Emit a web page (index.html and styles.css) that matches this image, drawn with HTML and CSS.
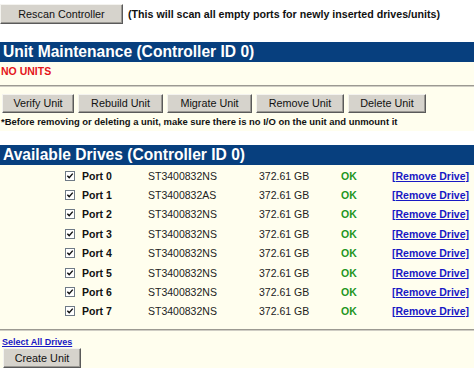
FILE: index.html
```html
<!DOCTYPE html>
<html>
<head>
<meta charset="utf-8">
<link rel="stylesheet" href="styles.css">
</head>
<body>
<div class="top">
  <button class="btn btn-rescan">Rescan Controller</button>
  <span class="top-note">(This will scan all empty ports for newly inserted drives/units)</span>
</div>

<div class="section-head head-unit">Unit Maintenance (Controller ID 0)</div>
<div class="panel panel-unit">
  <div class="no-units">NO UNITS</div>
  <div class="rule"></div>
  <div class="btn-row">
    <button class="btn btn-verify">Verify Unit</button>
    <button class="btn btn-rebuild">Rebuild Unit</button>
    <button class="btn btn-migrate">Migrate Unit</button>
    <button class="btn btn-remove">Remove Unit</button>
    <button class="btn btn-delete">Delete Unit</button>
  </div>
  <div class="warn">*Before removing or deleting a unit, make sure there is no I/O on the unit and unmount it</div>
</div>

<div class="section-head head-drives">Available Drives (Controller ID 0)</div>
<div class="panel panel-drives">
  <div class="drives">
    <div class="drive"><span class="cb"><svg viewBox="0 0 9 9"><path d="M1.5 4.2 L3.6 6.3 L7.6 1.8" /></svg></span><span class="port">Port 0</span><span class="model">ST3400832NS</span><span class="size">372.61 GB</span><span class="ok">OK</span><a class="rm" href="#">[Remove Drive]</a></div>
    <div class="drive"><span class="cb"><svg viewBox="0 0 9 9"><path d="M1.5 4.2 L3.6 6.3 L7.6 1.8" /></svg></span><span class="port">Port 1</span><span class="model">ST3400832AS</span><span class="size">372.61 GB</span><span class="ok">OK</span><a class="rm" href="#">[Remove Drive]</a></div>
    <div class="drive"><span class="cb"><svg viewBox="0 0 9 9"><path d="M1.5 4.2 L3.6 6.3 L7.6 1.8" /></svg></span><span class="port">Port 2</span><span class="model">ST3400832NS</span><span class="size">372.61 GB</span><span class="ok">OK</span><a class="rm" href="#">[Remove Drive]</a></div>
    <div class="drive"><span class="cb"><svg viewBox="0 0 9 9"><path d="M1.5 4.2 L3.6 6.3 L7.6 1.8" /></svg></span><span class="port">Port 3</span><span class="model">ST3400832NS</span><span class="size">372.61 GB</span><span class="ok">OK</span><a class="rm" href="#">[Remove Drive]</a></div>
    <div class="drive"><span class="cb"><svg viewBox="0 0 9 9"><path d="M1.5 4.2 L3.6 6.3 L7.6 1.8" /></svg></span><span class="port">Port 4</span><span class="model">ST3400832NS</span><span class="size">372.61 GB</span><span class="ok">OK</span><a class="rm" href="#">[Remove Drive]</a></div>
    <div class="drive"><span class="cb"><svg viewBox="0 0 9 9"><path d="M1.5 4.2 L3.6 6.3 L7.6 1.8" /></svg></span><span class="port">Port 5</span><span class="model">ST3400832NS</span><span class="size">372.61 GB</span><span class="ok">OK</span><a class="rm" href="#">[Remove Drive]</a></div>
    <div class="drive"><span class="cb"><svg viewBox="0 0 9 9"><path d="M1.5 4.2 L3.6 6.3 L7.6 1.8" /></svg></span><span class="port">Port 6</span><span class="model">ST3400832NS</span><span class="size">372.61 GB</span><span class="ok">OK</span><a class="rm" href="#">[Remove Drive]</a></div>
    <div class="drive"><span class="cb"><svg viewBox="0 0 9 9"><path d="M1.5 4.2 L3.6 6.3 L7.6 1.8" /></svg></span><span class="port">Port 7</span><span class="model">ST3400832NS</span><span class="size">372.61 GB</span><span class="ok">OK</span><a class="rm" href="#">[Remove Drive]</a></div>
  </div>
  <div class="rule rule-drives"></div>
  <a class="select-all" href="#">Select All Drives</a>
  <button class="btn btn-create">Create Unit</button>
</div>
</body>
</html>
```

FILE: styles.css
```css
html, body {
  margin: 0;
  padding: 0;
  background: #ffffff;
  font-family: "Liberation Sans", Arial, Helvetica, sans-serif;
  color: #111;
}
body {
  width: 474px;
  height: 368px;
  overflow: hidden;
}

.btn {
  display: block;
  box-sizing: border-box;
  margin: 0;
  padding: 0;
  font-family: "Liberation Sans", Arial, sans-serif;
  font-size: 10.8px;
  color: #111;
  background: #d6d3cc;
  border: 1px solid;
  border-color: #f4f3ef #5a5a5a #5a5a5a #f4f3ef;
  box-shadow: inset -1px -1px 0 #9a9893;
  text-align: center;
  line-height: 1;
}

.top {
  display: flex;
  align-items: center;
  gap: 5px;
  padding-top: 4px;
  height: 20px;
}
.btn-rescan {
  width: 123px;
  height: 20px;
}
.top-note {
  font-weight: bold;
  font-size: 10.67px;
  color: #111;
}

.section-head {
  background: #073f7e;
  color: #ffffff;
  font-weight: bold;
  font-size: 15.6px;
  height: 20px;
  line-height: 20px;
  padding-left: 3px;
  white-space: nowrap;
}
.head-unit {
  margin-top: 18px;
}
.head-drives {
  margin-top: 14px;
}

.panel {
  background: #fffeee;
}
.panel-unit {
  height: 69px;
}
.no-units {
  color: #e4141a;
  font-weight: bold;
  font-size: 10.5px;
  height: 19px;
  line-height: 19px;
  padding-left: 1px;
}
.rule {
  margin-top: 4px;
  height: 0;
  border-top: 1px solid #9c9a92;
  border-bottom: 1px solid #cfcdc4;
}
.btn-row {
  display: flex;
  gap: 4px;
  margin-top: 7px;
  padding-left: 2px;
}
.btn-row .btn {
  height: 19px;
}
.btn-verify { width: 72px; }
.btn-rebuild { width: 85px; }
.btn-migrate { width: 85px; }
.btn-remove { width: 88px; }
.btn-delete { width: 78px; }

.warn {
  margin-top: 3px;
  font-weight: bold;
  font-size: 9.45px;
  line-height: 12px;
  padding-left: 1px;
  white-space: nowrap;
}

.panel-drives {
  height: 204px;
}
.drives {
  padding-top: 1px;
}
.drive {
  display: grid;
  grid-template-columns: 17px 66px 111px 82px 51px auto;
  align-items: center;
  padding-left: 65px;
  height: 19.4px;
  font-size: 10.5px;
  white-space: nowrap;
}
.cb {
  box-sizing: border-box;
  width: 10px;
  height: 10px;
  border: 1px solid #6f7a86;
  background: #ffffff;
  display: flex;
}
.cb svg {
  width: 8px;
  height: 8px;
  fill: none;
  stroke: #111;
  stroke-width: 1.6;
}
.port {
  font-weight: bold;
  color: #111;
}
.model, .size {
  color: #222;
}
.ok {
  color: #1e961e;
  font-weight: bold;
}
.rm {
  color: #1818c4;
  font-weight: bold;
  text-decoration: underline;
}

.rule-drives {
  margin-top: 8px;
}
.select-all {
  display: block;
  margin-top: 6px;
  padding-left: 2px;
  font-size: 9px;
  font-weight: bold;
  line-height: 10px;
  color: #1818c4;
  text-decoration: underline;
}
.btn-create {
  margin-top: 1px;
  margin-left: 3px;
  width: 78px;
  height: 20px;
}
```
